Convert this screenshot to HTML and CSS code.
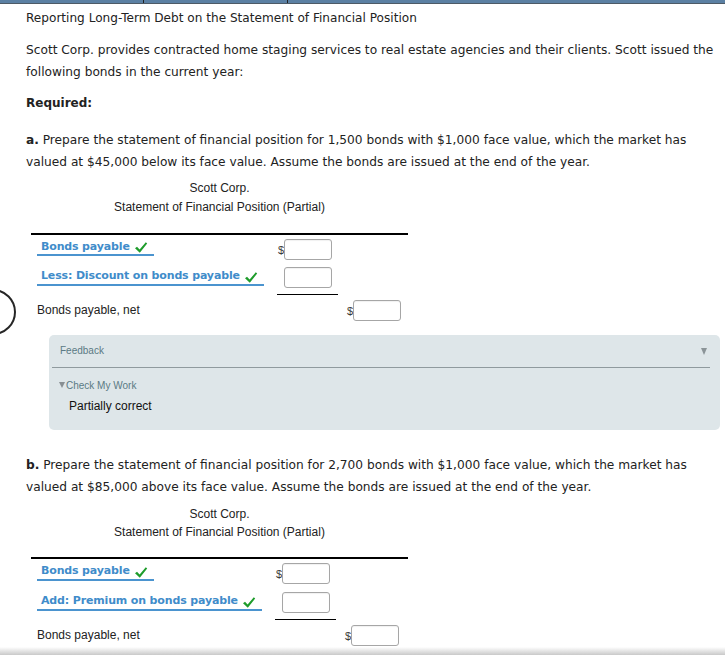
FILE: index.html
```html
<!DOCTYPE html>
<html>
<head>
<meta charset="utf-8">
<link rel="stylesheet" href="styles.css">
</head>
<body>
<div class="topbar"><span class="seg s1"></span><span class="seg s2"></span><span class="seg s3"></span></div>
<div class="ring"></div>
<main class="content">
  <p class="title">Reporting Long-Term Debt on the Statement of Financial Position</p>
  <p class="para">Scott Corp. provides contracted home staging services to real estate agencies and their clients. Scott issued the following bonds in the current year:</p>
  <p class="req">Required:</p>
  <p class="para part"><b>a.</b> Prepare the statement of financial position for 1,500 bonds with $1,000 face value, which the market has valued at $45,000 below its face value. Assume the bonds are issued at the end of the year.</p>

  <section class="stmt">
    <div class="stmt-head">
      <div>Scott Corp.</div>
      <div>Statement of Financial Position (Partial)</div>
    </div>
    <div class="grid">
      <div class="cell label"><span class="pick">Bonds payable <svg class="chk" viewBox="0 0 14 13"><path d="M1 7.2 L3 5.8 L5.6 8.6 L11.8 1.2 L13.2 2.4 L5.8 11.8 Z"/></svg></span></div>
      <div class="cell amt"><span class="dol">$</span><span class="box"></span></div>
      <div class="cell"></div>

      <div class="cell label second"><span class="pick">Less: Discount on bonds payable <svg class="chk" viewBox="0 0 14 13"><path d="M1 7.2 L3 5.8 L5.6 8.6 L11.8 1.2 L13.2 2.4 L5.8 11.8 Z"/></svg></span></div>
      <div class="cell amt"><span class="dol nodol">$</span><span class="box"></span></div>
      <div class="cell"></div>

      <div></div>
      <div class="rule-cell"><span class="rule"></span></div>
      <div></div>

      <div class="cell plain">Bonds payable, net</div>
      <div class="cell"></div>
      <div class="cell amt total"><span class="dol">$</span><span class="box"></span></div>
    </div>
  </section>

  <section class="feedback">
    <div class="fb-head"><span>Feedback</span><span class="fb-tri"></span></div>
    <div class="fb-line"></div>
    <div class="fb-check"><span class="fb-small-tri"></span>Check My Work</div>
    <div class="fb-result">Partially correct</div>
  </section>

  <p class="para part partb"><b>b.</b> Prepare the statement of financial position for 2,700 bonds with $1,000 face value, which the market has valued at $85,000 above its face value. Assume the bonds are issued at the end of the year.</p>

  <section class="stmt stmt-b">
    <div class="stmt-head">
      <div>Scott Corp.</div>
      <div class="sub">Statement of Financial Position (Partial)</div>
    </div>
    <div class="grid">
      <div class="cell label"><span class="pick">Bonds payable <svg class="chk" viewBox="0 0 14 13"><path d="M1 7.2 L3 5.8 L5.6 8.6 L11.8 1.2 L13.2 2.4 L5.8 11.8 Z"/></svg></span></div>
      <div class="cell amt"><span class="dol">$</span><span class="box"></span></div>
      <div class="cell"></div>

      <div class="cell label second"><span class="pick">Add: Premium on bonds payable <svg class="chk" viewBox="0 0 14 13"><path d="M1 7.2 L3 5.8 L5.6 8.6 L11.8 1.2 L13.2 2.4 L5.8 11.8 Z"/></svg></span></div>
      <div class="cell amt"><span class="dol nodol">$</span><span class="box"></span></div>
      <div class="cell"></div>

      <div></div>
      <div class="rule-cell"><span class="rule"></span></div>
      <div></div>

      <div class="cell plain">Bonds payable, net</div>
      <div class="cell"></div>
      <div class="cell amt total"><span class="dol">$</span><span class="box"></span></div>
    </div>
  </section>
</main>
<div class="bottom-shade"></div>
</body>
</html>
```
FILE: styles.css
```css
html, body { margin: 0; padding: 0; background: #fff; }
body { font-family: "DejaVu Sans", Verdana, sans-serif; color: #222; overflow: hidden; height: 655px; }

.topbar { display: flex; height: 3px; border-bottom: 1px solid #4d5a66; background: #5b80a3; }
.seg { height: 100%; }
.s1 { width: 143px; border-right: 1px solid #222; }
.s2 { width: 143px; border-right: 1px solid #222; }
.s3 { flex: 1; }

.ring { position: absolute; left: -30px; top: 289px; width: 42px; height: 42px; border: 2px solid #262626; border-radius: 50%; }

.content { padding: 0 5px 0 26px; }
p { margin: 0; }
.title { font-size: 12.1px; line-height: 22px; margin-top: 3px; }
.para { font-size: 12.2px; line-height: 22px; margin-top: 10px; }
.req { font-size: 12px; font-weight: bold; line-height: 22px; margin-top: 9px; }
.part { margin-top: 16px; line-height: 21.5px; }
.part b { font-weight: bold; }
.partb { margin-top: 25px; }

.stmt { margin-left: 5px; width: 377px; font-family: "Liberation Sans", Tahoma, sans-serif; font-size: 12px; }
.stmt-head { text-align: center; line-height: 19px; padding-top: 6px; padding-bottom: 16px; border-bottom: 2px solid #000; }
.stmt-b .stmt-head { line-height: 18px; padding-top: 7px; }

.grid { display: grid; grid-template-columns: 240px 70px 67px; grid-template-rows: 28px 28px 4px 30px; }
.stmt-b .grid { grid-template-columns: 238px 70px 67px; grid-template-rows: 29px 28px 4px 30px; }
.cell { display: flex; align-items: center; min-width: 0; white-space: nowrap; }
.label { padding-left: 6px; }
.pick { display: inline-flex; align-items: center; gap: 4px; padding: 0 6px 0 4px; border-bottom: 2px solid #4b94cf; color: #3f8cca; font-family: "DejaVu Sans", Verdana, sans-serif; font-weight: bold; font-size: 11px; letter-spacing: -0.15px; line-height: 15px; margin-top: -4px; white-space: nowrap; }
.second .pick { margin-top: -1px; }
.chk { width: 14px; height: 13px; fill: #1e9c2b; margin-top: 3px; flex: none; }
.plain { padding-left: 6px; }
.amt { padding-left: 7px; }
.total { padding-left: 6px; }
.dol { width: 6px; font-size: 11px; color: #3a3a3a; margin-top: 1px; }
.nodol { visibility: hidden; }
.box { width: 48px; height: 21px; box-sizing: border-box; border: 1px solid #a6a6a6; border-radius: 3px; background: #fff; box-shadow: inset 0 1px 1px rgba(0,0,0,0.06); flex: none; }
.rule-cell { display: flex; align-items: flex-end; padding-left: 6px; }
.rule { width: 61px; height: 1px; background: #000; }

.feedback { margin: 10px 0 0 23px; height: 95px; box-sizing: border-box; background: #dee6e9; border-radius: 5px; font-family: "Liberation Sans", Arial, sans-serif; }
.fb-head { display: flex; justify-content: space-between; align-items: flex-start; padding: 10px 13px 0 11px; font-size: 10px; line-height: 12px; color: #5b7a84; height: 12px; }
.fb-tri { width: 0; height: 0; border-left: 3.5px solid transparent; border-right: 3.5px solid transparent; border-top: 7px solid #8b9498; margin-top: 3px; }
.fb-line { height: 1px; background: #8f9a9e; margin: 10px 10px 0 3px; }
.fb-check { display: flex; align-items: center; padding: 12px 0 0 10px; font-size: 10px; line-height: 12px; color: #5b7a84; }
.fb-small-tri { width: 0; height: 0; border-left: 3px solid transparent; border-right: 3px solid transparent; border-top: 6px solid #888f93; margin-right: 1px; margin-top: -2px; }
.fb-result { padding: 7px 0 0 20px; font-size: 12px; line-height: 14px; color: #111; }

.bottom-shade { position: fixed; left: 0; right: 0; bottom: 0; height: 8px; background: linear-gradient(#ffffff, #c9c9c9); }
```
